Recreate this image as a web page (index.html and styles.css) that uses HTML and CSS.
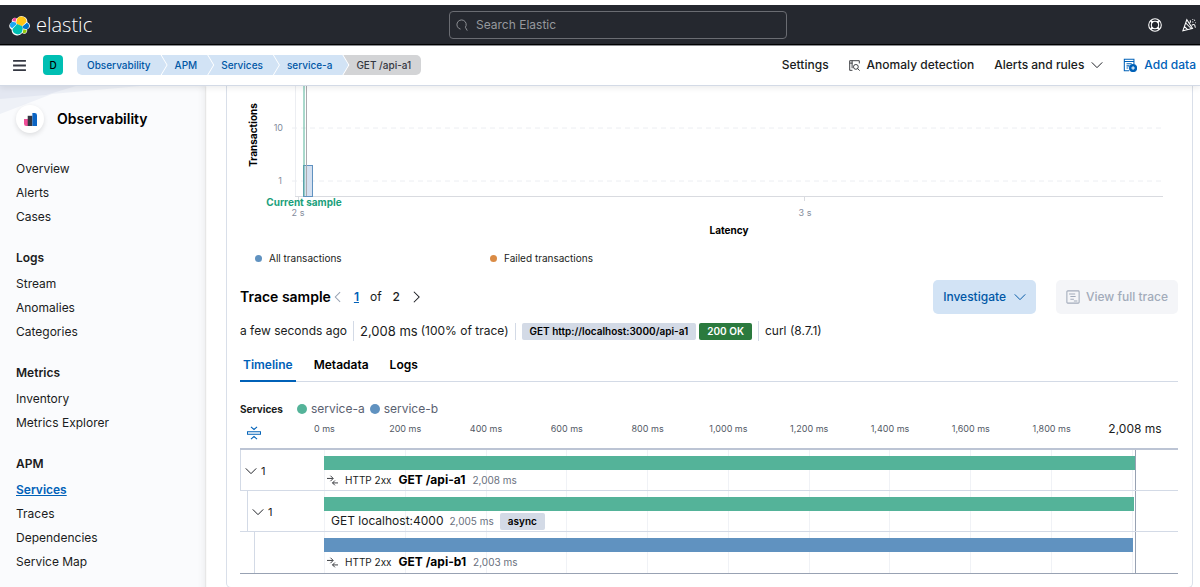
FILE: index.html
```html
<!DOCTYPE html>
<html lang="en">
<head>
    <meta charset="UTF-8">
    <meta name="viewport" content="width=device-width, initial-scale=1.0">
    <title>GET /api-a1 - APM - Elastic</title>
    <link rel="stylesheet" href="styles.css">
</head>
<body>

<header class="topbar">
    <a class="brand" href="#">
        <svg class="brand-logo" viewBox="0 0 32 32" aria-hidden="true">
            <path fill="#fff" d="M32 16.8a6 6 0 0 0-4-5.7A8.9 8.9 0 0 0 11.9 5.5a4.7 4.7 0 0 0-7.3 5.4A6.1 6.1 0 0 0 4 22.3a8.9 8.9 0 0 0 16.1 5.3 4.7 4.7 0 0 0 7.3-5.4 6 6 0 0 0 4.6-5.4"/>
            <path fill="#FEC514" d="m12.6 13.8 7 3.2 7-6.2A7.8 7.8 0 0 0 12.2 6.1L11 12.2z"/>
            <path fill="#00BFB3" d="M5.4 21.3a7.9 7.9 0 0 0 14.5 4.6l1.2-6.1-1.6-3-7-3.2z"/>
            <path fill="#F04E98" d="m5.4 9.2 4.8 1.1 1-5.4a3.8 3.8 0 0 0-5.8 4.3"/>
            <path fill="#1BA9F5" d="M5 10.3a5.3 5.3 0 0 0-.2 10l6.7-6.1-1.2-2.6z"/>
            <path fill="#93C90E" d="M20.9 27.2a3.8 3.8 0 0 0 5.8-4.3l-4.8-1.1z"/>
            <path fill="#07C" d="m21.8 20.5 5.2 1.2a5.3 5.3 0 0 0 .2-10l-6.8 6z"/>
        </svg>
        <span class="brand-name">elastic</span>
    </a>
    <label class="search">
        <svg class="icon" viewBox="0 0 16 16" aria-hidden="true"><path d="M6 13.500a6.200 6.200 0 1 1 6.500-2.500l2.500 4.500"/></svg>
        <input type="text" placeholder="Search Elastic" aria-label="Search Elastic">
    </label>
    <div class="topbar-actions">
        <button type="button" class="icon-button" aria-label="Help">
            <svg class="icon icon-help" viewBox="0 0 16 16"><circle cx="8" cy="8" r="7.200"/><circle cx="8" cy="8" r="4.200"/><path d="M3.200 2.800l2.600 1.700M2.800 3.200l1.700 2.600M12.800 2.800l-2.600 1.700M13.200 3.200l-1.700 2.600M3.200 13.200l2.600-1.700M2.800 12.800l1.700-2.600M12.800 13.200l-2.600-1.700M13.200 12.800l-1.700-2.600"/></svg>
        </button>
        <button type="button" class="icon-button" aria-label="What's new">
            <svg class="icon" viewBox="0 0 16 16"><path d="M5.500 2 1 14.500l11-2.500zM4.500 6l6 6M3 10l3.500 3.300M9 5.500c1-1 .8-2 .3-3M11 8.500c2-1.500 3-1 3.500-.5s0 2.500 1 3"/><path d="M12 5l.8-.8M14 3l.8-.8M12.300 1.500v.8M15 5.500h.8"/></svg>
        </button>
    </div>
</header>

<div class="subbar">
    <button type="button" class="icon-button menu-button" aria-label="Toggle navigation">
        <svg class="menu-icon" viewBox="0 0 14 12"><path d="M0 1h14M0 6h14M0 11h14"/></svg>
    </button>
    <button type="button" class="space">D</button>
    <nav class="breadcrumbs" aria-label="Breadcrumbs">
        <a class="crumb" href="#">Observability</a>
        <a class="crumb" href="#">APM</a>
        <a class="crumb" href="#">Services</a>
        <a class="crumb" href="#">service-a</a>
        <span class="crumb current">GET /api-a1</span>
    </nav>
    <nav class="page-links" aria-label="Page links">
        <a href="#">Settings</a>
        <a href="#">
            <svg class="icon icon-small" viewBox="0 0 16 16" aria-hidden="true"><path d="M5 15H1V1h14v4M1 4.500h4M4.500 1v11M12.500 12.500l3 3"/><circle cx="10" cy="10" r="3.500"/></svg>
            Anomaly detection
        </a>
        <button type="button" class="link-button">
            Alerts and rules
            <svg class="icon icon-chevron" viewBox="0 0 16 16" aria-hidden="true"><path d="M1 4.500 8 11.500l7-7"/></svg>
        </button>
        <a class="primary" href="#">
            <svg class="icon" viewBox="0 0 16 16" aria-hidden="true"><path d="M7 14.500H1.500v-13h11V7M1.500 4h11M4 6.500h6M4 9h3.500M4 11.500h2"/><circle cx="11.500" cy="11.500" r="4" fill="#0061b8"/><path class="plus" d="M11.500 9.500v4M9.500 11.500h4"/></svg>
            Add data
        </a>
    </nav>
</div>

<div class="page">
    <aside class="sidebar">
        <svg class="sidebar-art" viewBox="0 0 140 28" aria-hidden="true">
            <path fill="#eef1f7" d="M0 0h140L52 8 0 28z"/>
            <path fill="#e3e7f1" d="M0 0h76L46 9 0 13z"/>
        </svg>
        <div class="solution">
            <span class="solution-badge">
                <svg class="solution-icon" viewBox="0 0 14 14" aria-hidden="true">
                    <path fill="#F04E98" d="M0 6.500h5V14H2.500A2.500 2.500 0 0 1 0 11.500z"/>
                    <path fill="#343741" d="M4 3h5v11H4z"/>
                    <path fill="#0b64c4" d="M9 0h2.500A2.500 2.500 0 0 1 14 2.500V14H9z"/>
                </svg>
            </span>
            <h1>Observability</h1>
        </div>
        <nav aria-label="Observability">
            <ul class="nav-group">
                <li><a href="#">Overview</a></li>
                <li><a href="#">Alerts</a></li>
                <li><a href="#">Cases</a></li>
            </ul>
            <h2 class="nav-title">Logs</h2>
            <ul class="nav-group">
                <li><a href="#">Stream</a></li>
                <li><a href="#">Anomalies</a></li>
                <li><a href="#">Categories</a></li>
            </ul>
            <h2 class="nav-title">Metrics</h2>
            <ul class="nav-group">
                <li><a href="#">Inventory</a></li>
                <li><a href="#">Metrics Explorer</a></li>
            </ul>
            <h2 class="nav-title">APM</h2>
            <ul class="nav-group">
                <li><a class="active" href="#">Services</a></li>
                <li><a href="#">Traces</a></li>
                <li><a href="#">Dependencies</a></li>
                <li><a href="#">Service Map</a></li>
            </ul>
        </nav>
    </aside>

    <main class="content">
        <section class="panel">
            <!-- Latency distribution -->
            <svg class="chart" viewBox="0 0 938 160" role="img" aria-label="Latency distribution">
                <path class="grid" d="M52 42H923M52 95H923"/>
                <path class="axis-line" d="M55.500 0V110"/>
                <path class="axis-line base" d="M55 110.500H923M58.500 110v5M564.500 110v5"/>
                <rect class="bucket" x="63.500" y="79.500" width="9" height="31"/>
                <path class="marker-line" d="M66.500 0V110"/>
                <path class="sample-line" d="M64 0V110"/>
                <text class="chart-title" transform="translate(17 49) rotate(-90)" text-anchor="middle">Transactions</text>
                <text class="tick-text" x="43" y="45" text-anchor="end">10</text>
                <text class="tick-text" x="42" y="98" text-anchor="end">1</text>
                <text class="tick-text" x="58" y="130" text-anchor="middle">2 s</text>
                <text class="tick-text" x="565" y="130" text-anchor="middle">3 s</text>
                <text class="sample-text" x="64" y="120" text-anchor="middle">Current sample</text>
                <text class="chart-title" x="489" y="148" text-anchor="middle">Latency</text>
            </svg>
            <ul class="legend">
                <li><span class="dot blue"></span>All transactions</li>
                <li><span class="dot orange"></span>Failed transactions</li>
            </ul>

            <div class="trace-head">
                <h2>Trace sample</h2>
                <div class="pagination">
                    <button type="button" class="icon-button" aria-label="Previous" disabled>
                        <svg class="icon icon-arrow" viewBox="0 0 8 16"><path d="M7 2.500 1.500 8 7 13.500"/></svg>
                    </button>
                    <a href="#">1</a>
                    <span>of</span>
                    <span class="total">2</span>
                    <button type="button" class="icon-button" aria-label="Next">
                        <svg class="icon icon-arrow" viewBox="0 0 8 16"><path d="M1 2l6 6-6 6"/></svg>
                    </button>
                </div>
                <div class="trace-actions">
                    <button type="button" class="button">
                        Investigate
                        <svg class="icon icon-chevron" viewBox="0 0 16 16" aria-hidden="true"><path d="M1 4.500 8 11.500l7-7"/></svg>
                    </button>
                    <button type="button" class="button" disabled>
                        <svg class="icon" viewBox="0 0 16 16" aria-hidden="true"><rect x="1" y="1" width="14" height="14" rx="1"/><path d="M3.500 4.500h7M5 7.500h6M5 10.500h4M9 12.500h4"/></svg>
                        View full trace
                    </button>
                </div>
            </div>

            <div class="summary">
                <span class="summary-item">a few seconds ago</span>
                <span class="summary-item"><span class="duration">2,008 ms</span> (100% of trace)</span>
                <span class="summary-item">
                    <span class="badge">GET http://localhost:3000/api-a1</span>
                    <span class="badge success">200 OK</span>
                </span>
                <span class="summary-item">curl (8.7.1)</span>
            </div>

            <div class="tabs" role="tablist">
                <button type="button" class="tab selected" role="tab" aria-selected="true">Timeline</button>
                <button type="button" class="tab" role="tab">Metadata</button>
                <button type="button" class="tab" role="tab">Logs</button>
            </div>

            <div class="services">
                <h3>Services</h3>
                <span class="service"><span class="dot green"></span>service-a</span>
                <span class="service"><span class="dot blue"></span>service-b</span>
            </div>

            <div class="axis">
                <button type="button" class="icon-button fold-button" aria-label="Fold all">
                    <svg class="icon" viewBox="0 0 16 16"><path d="M4.500 1 8 4l3.500-3M4.500 15 8 12l3.500 3M.5 6.500h15v3H.5z"/></svg>
                </button>
                <div class="ticks">
                    <span>0 ms</span>
                    <span>200 ms</span>
                    <span>400 ms</span>
                    <span>600 ms</span>
                    <span>800 ms</span>
                    <span>1,000 ms</span>
                    <span>1,200 ms</span>
                    <span>1,400 ms</span>
                    <span>1,600 ms</span>
                    <span>1,800 ms</span>
                    <span class="end">2,008 ms</span>
                </div>
            </div>

            <div class="waterfall">
                <div class="row">
                    <button type="button" class="toggle">
                        <svg class="icon icon-chevron" viewBox="0 0 16 16" aria-hidden="true"><path d="M1 4.500 8 11.500l7-7"/></svg>
                        <span>1</span>
                    </button>
                    <div class="track">
                        <div class="bar green" style="width: 100%"></div>
                        <div class="span-info">
                            <svg class="icon icon-small" viewBox="0 0 16 16" aria-hidden="true"><path d="M0 5h8.500M5 1l4 4-4 4M16 11.500H8M11.500 8 8 11.500l3.500 3.500"/></svg>
                            <span class="http">HTTP 2xx</span>
                            <strong>GET /api-a1</strong>
                            <span class="time">2,008 ms</span>
                        </div>
                    </div>
                </div>
                <div class="row level-1">
                    <button type="button" class="toggle">
                        <svg class="icon icon-chevron" viewBox="0 0 16 16" aria-hidden="true"><path d="M1 4.500 8 11.500l7-7"/></svg>
                        <span>1</span>
                    </button>
                    <div class="track">
                        <div class="bar green" style="width: 99.9%"></div>
                        <div class="span-info child">
                            <span class="name">GET localhost:4000</span>
                            <span class="time">2,005 ms</span>
                            <span class="badge">async</span>
                        </div>
                    </div>
                </div>
                <div class="row level-2">
                    <span class="toggle"></span>
                    <div class="track">
                        <div class="bar blue" style="width: 99.8%"></div>
                        <div class="span-info">
                            <svg class="icon icon-small" viewBox="0 0 16 16" aria-hidden="true"><path d="M0 5h8.500M5 1l4 4-4 4M16 11.500H8M11.500 8 8 11.500l3.500 3.500"/></svg>
                            <span class="http">HTTP 2xx</span>
                            <strong>GET /api-b1</strong>
                            <span class="time">2,003 ms</span>
                        </div>
                    </div>
                </div>
            </div>
        </section>
    </main>
</div>

</body>
</html>
```

FILE: styles.css
```css
* {
    box-sizing: border-box;
}

body {
    margin: 0;
    min-height: 100vh;
    display: flex;
    flex-direction: column;
    font-family: Inter, sans-serif;
    font-size: 12px;
    line-height: 20px;
    color: #1a1c21;
    background-color: #fff;
    overflow-x: hidden;
}

a {
    color: inherit;
    text-decoration: none;
}

h1, h2, h3, ul {
    margin: 0;
    padding: 0;
}

ul {
    list-style: none;
}

button {
    font: inherit;
    color: inherit;
    border: none;
    background: none;
    padding: 0;
    cursor: pointer;
}

.icon {
    width: 14px;
    height: 14px;
    flex: none;
    fill: none;
    stroke: currentColor;
    stroke-width: 1.2;
}

.icon-small {
    width: 11px;
    height: 11px;
}

.icon-chevron {
    width: 12px;
    height: 12px;
    stroke-width: 1.3;
}

.icon-arrow {
    width: 7px;
    height: 14px;
}

.icon-button {
    display: flex;
    align-items: center;
}

/* Top bars */
.topbar {
    display: grid;
    grid-template-columns: 1fr 338px 413px;
    align-items: center;
    height: 46px;
    border-top: 5px solid #fff;
    border-bottom: 1px solid #8d8f94;
    background-color: #25282f;
    box-shadow: inset 0 -1px #000;
    color: #fff;
    padding-left: 9px;
}

.brand {
    display: flex;
    align-items: center;
    gap: 6px;
}

.brand-logo {
    width: 21px;
    height: 21px;
}

.brand-name {
    font-family: "Open Sans", sans-serif;
    font-size: 20px;
    font-weight: 300;
    line-height: 20px;
}

.search {
    display: flex;
    align-items: center;
    gap: 8px;
    height: 28px;
    padding: 0 6px;
    border: 1px solid #6a6c72;
    border-radius: 4px;
    color: #96989d;
}

.search .icon {
    width: 12px;
    height: 12px;
}

.search input {
    flex: 1;
    min-width: 0;
    border: none;
    outline: none;
    background: none;
    font: inherit;
    color: #fff;
    padding: 0;
}

.search input::placeholder {
    color: #96989d;
    opacity: 1;
}

.topbar-actions {
    display: flex;
    justify-content: flex-end;
    gap: 20px;
    padding-right: 4px;
}

.subbar {
    display: flex;
    align-items: center;
    height: 40px;
    padding: 0 4px 1px 13px;
    border-bottom: 1px solid #d3dae6;
    box-shadow: 0 2px 6px rgba(0, 0, 0, 0.08);
    background-color: #fff;
    position: relative;
    z-index: 1;
}

.menu-icon {
    width: 13px;
    height: 11px;
    stroke: #343741;
    stroke-width: 2;
}

.space {
    width: 20px;
    height: 20px;
    margin: 0 14px 0 17px;
    border-radius: 4px;
    background-color: #00bfb3;
    color: #000;
    font-size: 10px;
    font-weight: 500;
}

.breadcrumbs {
    display: flex;
    font-size: 10px;
    font-weight: 500;
}

.crumb {
    margin-left: -5px;
    padding: 0 16px 0 13px;
    background-color: #d2e3f5;
    color: #0057a6;
    clip-path: polygon(0 0, calc(100% - 6px) 0, 100% 50%, calc(100% - 6px) 100%, 0 100%, 6px 50%);
}

.crumb:first-child {
    margin-left: 0;
    padding-left: 10px;
    border-radius: 5px 0 0 5px;
    clip-path: polygon(0 0, calc(100% - 6px) 0, 100% 50%, calc(100% - 6px) 100%, 0 100%);
}

.crumb.current {
    padding-right: 10px;
    border-radius: 0 5px 5px 0;
    background-color: #d3d4d6;
    color: #343741;
    clip-path: polygon(0 0, 100% 0, 100% 100%, 0 100%, 6px 50%);
}

.page-links {
    display: flex;
    gap: 20px;
    margin-left: auto;
    font-weight: 500;
}

.page-links a,
.link-button {
    display: flex;
    align-items: center;
    gap: 7px;
}

.page-links .primary {
    color: #0061b8;
}

.primary .plus {
    stroke: #fff;
}

/* Layout */
.page {
    flex: 1;
    display: flex;
}

.sidebar {
    position: relative;
    width: 205px;
    flex: none;
    padding: 19px 16px;
    background-color: #fafbfd;
    box-shadow: inset -4px 0 8px -4px rgba(0, 0, 0, 0.08), 0 0 2px rgba(0, 0, 0, 0.3);
}

.sidebar-art {
    position: absolute;
    top: 0;
    left: 0;
    width: 140px;
}

.solution {
    position: relative;
    display: flex;
    align-items: center;
    gap: 13px;
    margin-bottom: 24px;
}

.solution-badge {
    display: flex;
    align-items: center;
    justify-content: center;
    width: 28px;
    height: 28px;
    border-radius: 50%;
    background-color: #fff;
    box-shadow: 0 2px 5px rgba(0, 0, 0, 0.12);
}

.solution-icon {
    width: 13px;
    height: 13px;
}

.solution h1 {
    font-size: 14px;
    font-weight: 600;
    color: #000;
}

.nav-group,
.nav-title {
    line-height: 24px;
}

.nav-title {
    margin: 17px 0 2px;
    font-size: 12px;
    font-weight: 600;
}

.nav-group .active {
    color: #0061b8;
    font-weight: 600;
    text-decoration: underline;
}

.content {
    flex: 1;
    min-width: 0;
    padding: 0 7px 0 21px;
}

.panel {
    padding: 0 14px 13px 13px;
    border: 1px solid #d9dfe9;
    border-top: none;
    border-radius: 0 0 5px 5px;
}

/* Chart */
.chart {
    display: block;
    width: 100%;
}

.grid {
    stroke: #eceef2;
    stroke-dasharray: 5 4;
}

.axis-line {
    stroke: #eceef2;
}

.axis-line.base {
    fill: none;
    stroke: #d9dbe0;
}

.bucket {
    fill: #d4e0f0;
    stroke: #6092c0;
}

.marker-line {
    stroke: #aaaaae;
}

.sample-line {
    stroke: #54b399;
}

.chart-title {
    font-size: 10px;
    font-weight: 700;
}

.tick-text {
    font-size: 9px;
    fill: #848c9c;
}

.sample-text {
    font-size: 10px;
    font-weight: 700;
    fill: #1a9f7b;
}

.legend {
    display: grid;
    grid-template-columns: 235px 235px;
    padding-left: 15px;
    font-size: 10px;
    line-height: 24px;
}

.legend li {
    display: flex;
    align-items: center;
    gap: 7px;
}

.dot {
    width: 7px;
    height: 7px;
    border-radius: 50%;
}

.green {
    background-color: #54b399;
}

.blue {
    background-color: #6092c0;
}

.orange {
    background-color: #da8b45;
}

/* Trace sample */
.trace-head {
    display: flex;
    align-items: center;
    margin-top: 10px;
}

.trace-head h2 {
    font-size: 14px;
    font-weight: 600;
    color: #000;
}

.pagination {
    display: flex;
    align-items: center;
    gap: 11px;
    margin-left: 1px;
}

.pagination .icon-button {
    padding: 0 2px;
}

.pagination a {
    color: #0061b8;
    font-weight: 600;
    text-decoration: underline;
}

.pagination .total {
    font-weight: 500;
}

.icon-button:disabled {
    color: #98a2b3;
}

.trace-actions {
    display: flex;
    gap: 20px;
    margin-left: auto;
}

.button {
    display: flex;
    align-items: center;
    gap: 6px;
    height: 34px;
    padding: 0 10px;
    border-radius: 5px;
    background-color: #d2e3f5;
    color: #0057a6;
    font-weight: 500;
}

.button .icon-chevron {
    margin-left: 2px;
}

.button:disabled {
    background-color: #f4f5f8;
    color: #a2abba;
}

.summary {
    display: flex;
    align-items: center;
    height: 20px;
    margin-top: 7px;
}

.summary-item {
    display: flex;
    align-items: center;
    gap: 3px;
    padding: 0 6px;
    border-left: 1px solid #d3dae6;
}

.summary-item:first-child {
    padding-left: 0;
    border-left: none;
}

.duration {
    font-size: 13px;
}

.badge {
    padding: 0 8px;
    border-radius: 2px;
    background-color: #d3dae6;
    color: #000;
    font-size: 10px;
    font-weight: 600;
    line-height: 17px;
}

.badge.success {
    background-color: #2b7a3e;
    color: #fff;
}

.tabs {
    display: flex;
    gap: 15px;
    height: 32px;
    margin-top: 9px;
    box-shadow: inset 0 -1px #d3dae6;
}

.tab {
    padding: 0 3px 2px;
    font-weight: 600;
    color: #000;
}

.tab.selected {
    color: #0061b8;
    box-shadow: inset 0 -2px #0061b8;
}

/* Timeline */
.services {
    display: flex;
    align-items: center;
    margin-top: 17px;
}

.services h3 {
    margin-right: 14px;
    font-size: 10px;
    font-weight: 700;
}

.service {
    display: flex;
    align-items: center;
    gap: 4px;
    margin-right: 5px;
    color: #5a6170;
}

.service .dot {
    width: 10px;
    height: 10px;
}

.axis {
    display: flex;
    height: 31px;
    border-bottom: 2px solid #bcc4d4;
}

.fold-button {
    width: 44px;
    height: 27px;
    padding-left: 7px;
    color: #0061b8;
}

.ticks {
    flex: 1;
    display: grid;
    grid-template-columns: repeat(10, 1fr) 86px;
    text-align: center;
    font-size: 9px;
    color: #535966;
}

.ticks .end {
    font-size: 12px;
    color: #1a1c21;
}

.waterfall {
    border-bottom: 1px solid #98a2b3;
}

.row {
    display: flex;
    height: 41px;
    padding-right: 42px;
    border-bottom: 1px solid #d3dae6;
}

.row:last-child {
    border-bottom: none;
}

.toggle {
    display: flex;
    align-items: center;
    gap: 4px;
    width: 84px;
    padding: 2px 0 0 4px;
    border-left: 1px solid #d3dae6;
    font-size: 11px;
}

.level-1 .toggle {
    width: 77px;
    margin-left: 7px;
}

.level-2 .toggle {
    width: 70px;
    margin-left: 14px;
}

.track {
    flex: 1;
    padding-top: 6px;
    border-right: 1px solid #98a2b3;
    background-image: repeating-linear-gradient(to right, #f0f2f6 0, #f0f2f6 1px, transparent 1px, transparent 9.96%);
}

.bar {
    height: 14px;
}

.span-info {
    display: flex;
    align-items: center;
    gap: 7px;
    padding-left: 3px;
}

.span-info.child {
    gap: 6px;
    padding-left: 7px;
}

.http {
    font-size: 10px;
}

.span-info strong {
    color: #000;
    font-weight: 700;
}

.time {
    font-size: 10px;
    color: #69707d;
}
```
